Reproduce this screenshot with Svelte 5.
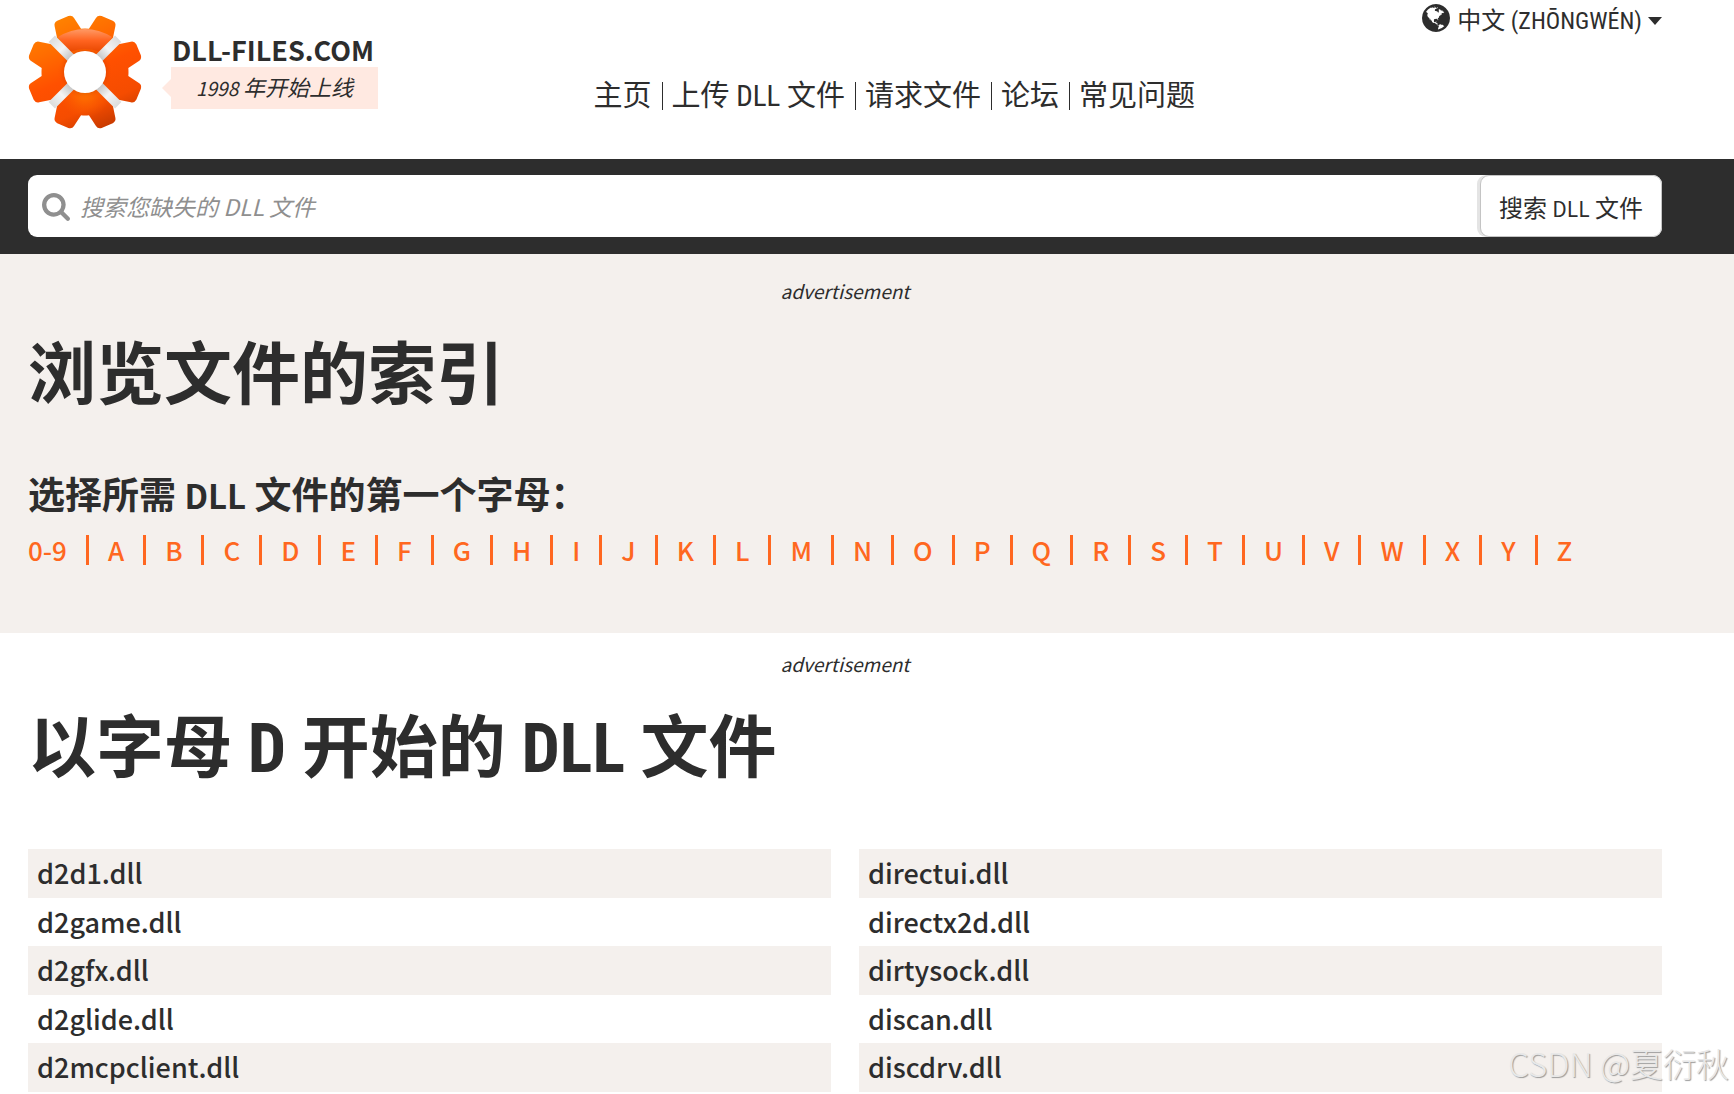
<script lang="ts">
  type NavLink = {
    label: string;
    href: string;
  };

  const nav: NavLink[] = [
    { label: '主页', href: '#home' },
    { label: '上传 DLL 文件', href: '#upload' },
    { label: '请求文件', href: '#request' },
    { label: '论坛', href: '#forum' },
    { label: '常见问题', href: '#faq' }
  ];

  const letters = ['0-9', ...'ABCDEFGHIJKLMNOPQRSTUVWXYZ'];

  const columns = [
    ['d2d1.dll', 'd2game.dll', 'd2gfx.dll', 'd2glide.dll', 'd2mcpclient.dll'],
    ['directui.dll', 'directx2d.dll', 'dirtysock.dll', 'discan.dll', 'discdrv.dll']
  ];

  const teeth = [22.5, 67.5, 112.5, 157.5, 202.5, 247.5, 292.5, 337.5];
  const straps = [45, 135, 225, 315];

  let query = '';
</script>

<header class="header">
  <a class="brand" href="#home">
    <svg class="logo" viewBox="-57 -57 114 114" aria-hidden="true">
      <defs>
        <linearGradient id="body" gradientUnits="userSpaceOnUse" x1="-24" y1="-57" x2="24" y2="57">
          <stop offset="0" stop-color="#ff8400" />
          <stop offset="0.25" stop-color="#ff6c00" />
          <stop offset="0.5" stop-color="#ff5000" />
          <stop offset="0.78" stop-color="#f54c00" />
          <stop offset="1" stop-color="#c23800" />
        </linearGradient>
        <linearGradient id="shine" x1="0" y1="0" x2="0" y2="1">
          <stop offset="0" stop-color="#ff9a66" />
          <stop offset="0.5" stop-color="#ff6420" />
          <stop offset="1" stop-color="#e84800" />
        </linearGradient>
        <radialGradient id="glow" gradientUnits="userSpaceOnUse" cx="0" cy="20" r="26">
          <stop offset="0" stop-color="#ff7c00" />
          <stop offset="1" stop-color="#ff6000" stop-opacity="0" />
        </radialGradient>
        <radialGradient id="tube" gradientUnits="userSpaceOnUse" cx="0" cy="0" r="44">
          <stop offset="0.47" stop-color="#c83c00" stop-opacity="0.35" />
          <stop offset="0.62" stop-color="#ff5000" stop-opacity="0" />
        </radialGradient>
        <linearGradient id="strap" x1="0" y1="0" x2="0" y2="1">
          <stop offset="0" stop-color="#dcdcdc" />
          <stop offset="0.5" stop-color="#f4f4f4" />
          <stop offset="1" stop-color="#bdbdbd" />
        </linearGradient>
      </defs>
      <mask id="hole">
        <rect x="-60" y="-60" width="120" height="120" fill="#fff" />
        <circle r="21" fill="#000" />
      </mask>
      <g mask="url(#hole)">
        <clipPath id="gear">
          <circle r="43.5" />
          {#each teeth as angle}
            <path d="M-14 -36L-10.500 -54Q-10 -57.500 -6 -58L6 -58Q10 -57.500 10.500 -54L14 -36Z" transform="rotate({angle})" />
          {/each}
        </clipPath>
        <rect x="-58" y="-58" width="116" height="116" fill="url(#body)" clip-path="url(#gear)" />
        <circle cy="20" r="26" fill="url(#glow)" clip-path="url(#gear)" />
        <circle r="43.500" fill="url(#tube)" />
        <path d="M-27 -35Q-14 -43 0 -43Q14 -43 27 -35L15 -20Q0 -26 -15 -20Z" fill="url(#shine)" />
        {#each straps as angle}
          <rect x="-4.500" y="-47" width="9" height="29" fill="url(#strap)" transform="rotate({angle})" />
        {/each}
      </g>
    </svg>
    <span class="brand-text">
      <strong>DLL-FILES.COM</strong>
      <em><span>1998</span> 年开始上线</em>
    </span>
  </a>

  <nav class="nav">
    {#each nav as item}
      <a href={item.href}>{item.label}</a>
    {/each}
  </nav>

  <button class="language" type="button">
    <svg class="globe" viewBox="0 128 1536 1536" aria-hidden="true">
      <path d="M768 128q209 0 385.5 103t279.5 279.500 103 385.500-103 385.500-279.500 279.500-385.500 103-385.500-103-279.500-279.500-103-385.500 103-385.500 279.500-279.500 385.500-103zm274 521q-2 1-9.500 9.500t-13.500 9.500q2 0 4.500-5t5-11 3.500-7q6-7 22-15 14-6 52-12 34-8 51 11-2-2 9.500-13t14.500-12q3-2 15-4.500t15-7.500l2-22q-12 1-17.500-7t-6.500-21q0 2-6 8 0-7-4.500-8t-11.500 1-9 1q-10-3-15-7.500t-8-16.500-4-15q-2-5-9.500-10.500t-9.500-10.500q-1-2-2.500-5.500t-3-6.500-4-5.500-5.500-2.500-7 5-7.500 10-4.500 5q-3-2-6-1.500t-4.500 1-4.500 3-5 3.500q-3 2-8.500 3t-8.500 2q15-5-1-11-10-4-16-3 9-4 7.500-12t-8.500-14h5q-1-4-8.500-8.500t-17.500-8.500-13-6q-8-5-34-9.500t-33-.5q-5 6-4.500 10.500t4 14 3.500 12.500q1 6-5.500 13t-6.500 12q0 7 14 15.500t10 21.500q-3 8-16 16t-16 12q-5 8-1.500 18.500t10.500 16.500q2 2 1.500 4t-3.500 4.500-5.500 4-6.500 3.500l-3 2q-11 5-20.500-6t-13.500-26q-7-25-16-30-23-8-29 1-5-13-41-26-25-9-58-4 6-1 0-15-7-15-19-12 3-6 4-17.500t1-13.500q3-13 12-23 1-1 7-8.500t9.500-13.500.5-6q35 4 50-11 5-5 11.500-17t10.500-17q9-6 14-5.500t14.500 5.500 14.500 5q14 1 15.500-11t-7.500-20q12 1 3-17-5-7-8-9-12-4-27 5-8 4 2 8-1-1-9.500 10.500t-16.500 17.500-16-5q-1-1-5.500-13.500t-9.500-13.500q-8 0-16 15 3-8-11-15t-24-8q19-12-8-27-7-4-20.500-5t-19.500 4q-5 7-5.500 11.500t5 8 10.500 5.500 11.500 4 8.500 3q14 10 8 14-2 1-8.500 3.500t-11.500 4.500-6 4q-3 4 0 14t-2 14q-5-5-9-17.500t-7-16.500q7 9-25 6l-10-1q-4 0-16 2t-20.500 1-13.500-8q-4-8 0-20 1-4 4-2-4-3-11-9.500t-10-8.500q-46 15-94 41 6 1 12-1 5-2 13-6.500t10-5.500q34-14 42-7l5-5q14 16 20 25-7-4-30-1-20 6-22 12 7 12 5 18-4-3-11.500-10t-14.500-11-15-5q-16 0-22 1-146 80-235 222 7 7 12 8 4 1 5 9t2.500 11 11.500-3q9 8 3 19 1-1 44 27 19 17 21 21 3 11-10 18-1-2-9-9t-9-4q-3 5 .5 18.500t10.500 12.500q-7 0-9.500 16t-2.500 35.500-1 23.500l2 1q-3 12 5.500 34.500t21.500 19.500q-13 3 20 43 6 8 8 9 3 2 12 7.500t15 10 10 10.500q4 5 10 22.500t14 23.500q-2 6 9.500 20t10.500 23q-1 0-2.500 1t-2.500 1q3 7 15.500 14t15.500 13q1 3 2 10t3 11 8 2q2-20-24-62-15-25-17-29-3-5-5.500-15.500t-4.500-14.500q2 0 6 1.500t8.500 3.500 7.500 4 2 3q-3 7 2 17.500t12 18.500 17 19 12 13q6 6 14 19.500t0 13.500q9 0 20 10.500t17 19.500q5 8 8 26t5 24q2 7 8.500 13.500t12.500 9.500l16 8 13 7q5 2 18.500 10.500t21.500 11.500q10 4 16 4t14.500-2.500 13.500-3.500q15-2 29 15t21 21q36 19 55 11-2 1 .5 7.500t8 15.500 9 14.500 5.500 8.500q5 6 18 15t18 15q6-4 7-9-3 8 7 20t18 10q14-3 14-32-31 15-49-18 0-1-2.500-5.500t-4-8.500-2.500-8.500 0-7.500 5-3q9 0 10-3.500t-2-12.500-4-13q-1-8-11-20t-12-15q-5 9-16 8t-16-9q0 1-1.500 5.500t-1.500 6.500q-13 0-15-1 1-3 2.500-17.500t3.500-22.500q1-4 5.500-12t7.500-14.500 4-12.500-4.500-9.500-17.500-2.500q-19 1-26 20-1 3-3 10.500t-5 11.500-9 7q-7 3-24 2t-24-5q-13-8-22.500-29t-9.500-37q0-10 2.500-26.500t3-25-5.500-24.500q3-2 9-9.500t10-10.500q2-1 4.500-1.500t4.500 0 4-1.500 3-6q-1-1-4-3-3-3-4-3 7 3 28.500-1.500t27.500 1.500q15 11 22-2 0-1-2.500-9.500t-.5-13.500q5 27 29 9 3 3 15.500 5t17.500 5q3 2 7 5.500t5.500 4.500 5-.5 8.500-6.500q10 14 12 24 11 40 19 44 7 3 11 2t4.500-9.500 0-14-1.500-12.500l-1-8v-18l-1-8q-15-3-18.500-12t1.500-18.500 15-18.500q1-1 8-3.500t15.500-6.500 12.500-8q21-19 15-35 7 0 11-9-1 0-5-3t-7.500-5-4.500-2q9-5 2-16 5-3 7.500-11t7.500-10q9 12 21 2 8-8 1-16 5-7 20.500-10.500t18.500-9.500q7 2 8-2t1-12 3-12q4-5 15-9t13-5l17-11q3-4 0-4 18 2 31-11 10-11-6-20 3-6-3-9.500t-15-5.500q3-1 11.500-.5t10.500-1.500q15-10-7-16-17-5-43 12zm-163 877q206-36 351-189-3-3-12.500-4.500t-12.500-3.500q-18-7-24-8 1-7-2.500-13t-8-9-12.500-8-11-7q-2-2-7-6t-7-5.500-7.500-4.500-8.500-2-10 1l-3 1q-3 1-5.500 2.500t-5.500 3-4 3 0 2.500q-21-17-36-22-5-1-11-5.500t-10.500-7-10-1.500-11.500 7q-5 5-6 15t-2 13q-7-5 0-17.500t2-18.500q-3-6-10.500-4.500t-12 4.500-11.500 8.500-9 6.500-8.500 5.500-8.500 7.500q-3 4-6 12t-5 11q-2-4-11.500-6.500t-9.500-5.500q2 10 4 35t5 38q7 31-12 48-27 25-29 40-4 22 12 26 0 7-8 20.500t-7 21.500q0 6 2 16z" />
    </svg>
    <span>中文 (ZHŌNGWÉN)</span>
    <svg class="caret" viewBox="0 0 14 8" aria-hidden="true"><path d="M0 0H14L7 8Z" /></svg>
  </button>
</header>

<div class="search-bar">
  <form class="search" on:submit|preventDefault>
    <label for="search" aria-label="搜索">
      <svg viewBox="64 128 1664 1664" aria-hidden="true">
        <path d="M1216 832q0-185-131.500-316.500t-316.500-131.500-316.500 131.500-131.500 316.500 131.500 316.500 316.500 131.500 316.500-131.500 131.500-316.500zm512 832q0 52-38 90t-90 38q-54 0-90-38l-343-342q-179 124-399 124-143 0-273.500-55.500t-225-150-150-225-55.500-273.500 55.500-273.500 150-225 225-150 273.500-55.500 273.500 55.500 225 150 150 225 55.500 273.500q0 220-124 399l343 343q37 37 37 90z" />
      </svg>
    </label>
    <input id="search" type="text" placeholder="搜索您缺失的 DLL 文件" bind:value={query} />
    <button type="submit">搜索 <span>DLL</span> 文件</button>
  </form>
</div>

<section class="index">
  <p class="ad">advertisement</p>
  <h1>浏览文件的索引</h1>
  <h2>选择所需 <span>DLL</span> 文件的第一个字母：</h2>
  <div class="letters">
    {#each letters as letter}
      <a href="#{letter}">{letter}</a>
    {/each}
  </div>
</section>

<section class="files">
  <p class="ad">advertisement</p>
  <h1>以字母 D 开始的 DLL 文件</h1>
  <div class="columns">
    {#each columns as files}
      <ul>
        {#each files as file}
          <li><a href="#{file}">{file}</a></li>
        {/each}
      </ul>
    {/each}
  </div>
</section>

<div class="watermark">CSDN @夏衍秋</div>

<style>
  :global(body) {
    position: relative;
    background: #fff;
    color: #2d2d2d;
    font-family: 'Noto Sans CJK SC', sans-serif;
    overflow-x: hidden;
  }

  a {
    color: inherit;
    text-decoration: none;
  }

  h1,
  h2,
  p,
  ul {
    margin: 0;
    padding: 0;
  }

  .header,
  .search-bar,
  .index,
  .files {
    padding-left: 28px;
    padding-right: 72px;
  }

  .header {
    display: grid;
    grid-template-columns: 34% auto 1fr;
    column-gap: 10px;
    align-items: start;
    height: 159px;
    box-sizing: border-box;
  }

  .brand {
    display: flex;
    gap: 29px;
    padding-top: 15px;
  }

  .logo {
    width: 114px;
    height: 114px;
  }

  .brand-text {
    display: flex;
    flex-direction: column;
    padding-top: 18px;
  }

  .brand-text strong {
    padding-left: 1px;
    font-size: 27px;
    line-height: 34px;
  }

  .brand-text em {
    position: relative;
    padding: 0 25px 4px;
    background: #ffe9e1;
    font-size: 22px;
    line-height: 38px;
    text-align: center;
  }

  .brand-text em span {
    font-size: 19px;
    line-height: 1;
  }

  .brand-text em::before {
    content: '';
    position: absolute;
    left: -9px;
    top: 12px;
    border: 9px solid transparent;
    border-left: none;
    border-right-color: #ffe9e1;
  }

  .nav {
    display: flex;
    align-items: center;
    padding-top: 82px;
    font-family: 'Roboto Condensed', 'Liberation Sans Narrow', 'Noto Sans CJK SC', sans-serif;
    font-size: 29px;
    line-height: 28px;
  }

  .nav a {
    padding: 0 10px 0 9px;
    border-left: 1px solid #2d2d2d;
  }

  .nav a:first-child {
    padding-left: 0;
    border-left: none;
  }

  .language {
    display: flex;
    align-items: flex-start;
    justify-self: end;
    padding: 4px 0 0;
    border: none;
    background: none;
    color: inherit;
    font-family: 'Roboto Condensed', 'Liberation Sans Narrow', 'Noto Sans CJK SC', sans-serif;
    font-size: 24px;
    line-height: 34px;
  }

  .language span {
    padding: 0 6px 0 7px;
  }

  .globe {
    width: 28px;
    height: 28px;
    fill: #2d2d2d;
  }

  .caret {
    align-self: center;
    width: 14px;
    height: 8px;
    fill: #2d2d2d;
  }

  .search-bar {
    padding-top: 16px;
    padding-bottom: 17px;
    background: #2d2d2d;
  }

  .search {
    display: flex;
    height: 62px;
    border-radius: 9px;
    background: #fff;
    overflow: hidden;
  }

  .search label {
    display: flex;
    align-items: center;
    padding: 2px 10px 0 14px;
  }

  .search label svg {
    width: 28px;
    height: 28px;
    fill: #8f8f8f;
  }

  .search input {
    flex: 1;
    min-width: 0;
    padding: 0;
    border: none;
    outline: none;
    background: none;
    color: #2d2d2d;
    font-family: inherit;
    font-size: 23px;
    font-style: italic;
  }

  .search input::placeholder {
    color: #8f8f8f;
    opacity: 1;
  }

  .search button {
    padding: 0 18px;
    border: 1px solid #c4c4c4;
    border-radius: 9px;
    background: #fff;
    box-shadow: -3px 0 0 #e4e4e4;
    color: #2d2d2d;
    font-family: inherit;
    font-size: 24px;
  }

  .search button span {
    font-size: 21px;
  }

  .ad {
    font-size: 19px;
    font-style: italic;
    line-height: 30px;
    text-align: center;
  }

  h1 {
    font-family: 'Roboto Condensed', 'Liberation Sans Narrow', 'Noto Sans CJK SC', sans-serif;
    font-size: 68px;
    line-height: 80px;
  }

  .index {
    padding-top: 22px;
    padding-bottom: 68px;
    background: #f4f0ed;
  }

  .index h1 {
    padding-top: 30px;
  }

  h2 {
    padding-top: 52px;
    font-size: 37px;
    line-height: 50px;
  }

  h2 span {
    font-size: 33px;
    line-height: 1;
  }

  .letters {
    display: flex;
    flex-wrap: wrap;
    padding-top: 17px;
    color: #ff6720;
    font-size: 26px;
    font-weight: 500;
    line-height: 30px;
  }

  .letters a {
    padding: 0 19px;
    border-left: 3px solid #ff6720;
  }

  .letters a:first-child {
    padding-left: 0;
    border-left: none;
  }

  .files {
    padding-top: 16px;
  }

  .files h1 {
    padding-top: 30px;
  }

  .columns {
    display: grid;
    grid-template-columns: 1fr 1fr;
    gap: 28px;
    padding-top: 60px;
  }

  ul {
    list-style: none;
    font-size: 27px;
    font-weight: 500;
    line-height: 1.8;
  }

  li {
    padding: 0 9px;
  }

  li:nth-child(odd) {
    background: #f4f0ed;
  }

  .watermark {
    position: absolute;
    right: 5px;
    bottom: 5px;
    color: #e8e8e8;
    font-size: 33px;
    font-weight: 300;
    line-height: 48px;
    text-shadow: 1px 1px 1px #9a9a9a;
  }
</style>
